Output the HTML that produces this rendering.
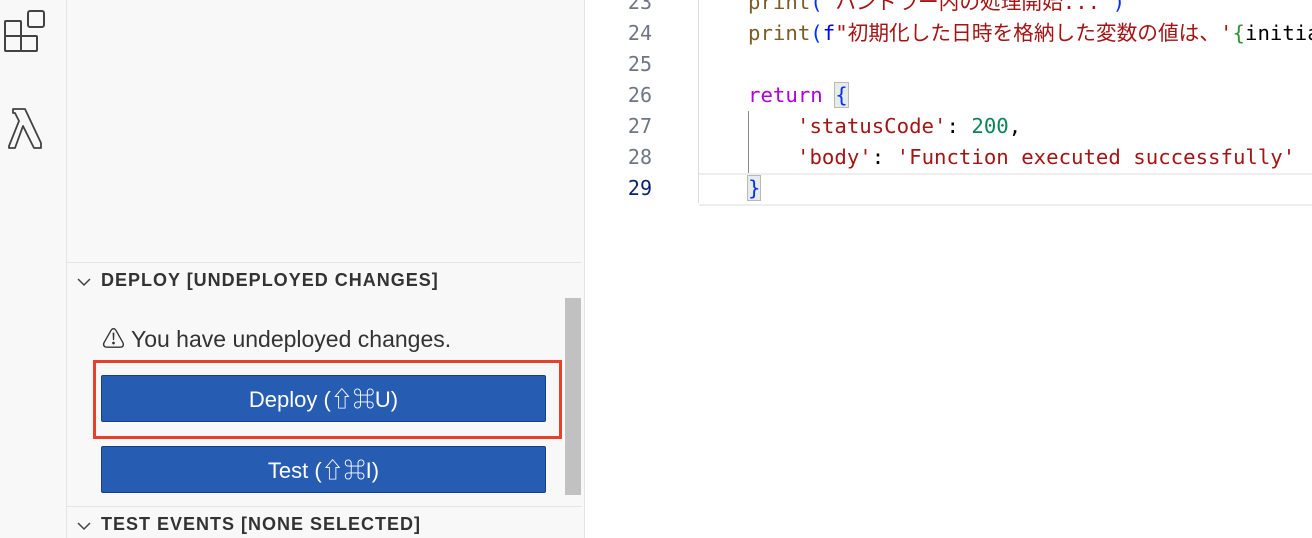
<!DOCTYPE html>
<html><head><meta charset="utf-8"><style>
body{margin:0;width:1312px;height:538px;overflow:hidden;background:#fff;position:relative;font-family:"Liberation Sans","Noto Sans CJK JP",sans-serif}
.abs{position:absolute}
.code{font-family:"DejaVu Sans Mono","Noto Sans CJK JP",monospace;font-size:20.7px;white-space:pre;line-height:31px;height:31px}
.ln{position:absolute;left:600px;width:52px;text-align:right;color:#6e7681;font-family:"DejaVu Sans Mono",monospace;font-size:20px;line-height:31px}
.btn{position:absolute;left:101px;width:445px;height:47px;background:#265db3;border:1px solid #143f8c;border-radius:2px;color:#fff;font-size:22px;text-align:center;line-height:47px;box-sizing:border-box}
.hdr{position:absolute;left:78px;font-weight:bold;font-size:18px;color:#333;letter-spacing:1px}
</style></head><body>
<div class="abs" style="left:0;top:0;width:66px;height:538px;background:#f8f8f8"></div>
<div class="abs" style="left:66px;top:0;width:517px;height:538px;background:#f8f8f8;border-left:1px solid #e4e4e4;border-right:1px solid #e4e4e4"></div>
<svg class="abs" style="left:0;top:0" width="66" height="160" fill="none" stroke="#424242" stroke-width="2" stroke-linejoin="round">
<rect x="5" y="21" width="16" height="15" rx="1"/><rect x="5" y="36" width="16" height="15" rx="1"/><rect x="21" y="36" width="16" height="15" rx="1"/><rect x="28" y="11" width="16" height="16" rx="2"/>
<path d="M13 109H25L41 143V148H34L23 126L15 148H9V146L19 121L15 113H13Z" stroke-width="1.8"/>
</svg>
<div class="abs" style="left:67px;top:262px;width:515px;height:1px;background:#e4e4e4"></div>
<svg class="abs" style="left:76px;top:276px" width="16" height="12" fill="none" stroke="#424242" stroke-width="1.5"><path d="M2 3l6 6 6-6"/></svg>
<div class="hdr" style="left:101px;top:270px">DEPLOY [UNDEPLOYED CHANGES]</div>
<div class="abs" style="left:565px;top:298px;width:16px;height:197px;background:#c1c1c1"></div>
<div class="abs" style="left:102px;top:320px;font-size:23px;color:#333">⚠ You have undeployed changes.</div>
<div class="abs" style="left:93px;top:360px;width:469px;height:79px;border:3px solid #e8402a;box-sizing:border-box"></div>
<div class="btn" style="top:375px">Deploy (⇧⌘U)</div>
<div class="btn" style="top:446px">Test (⇧⌘I)</div>
<div class="abs" style="left:67px;top:506px;width:515px;height:1px;background:#e4e4e4"></div>
<svg class="abs" style="left:76px;top:520px" width="16" height="12" fill="none" stroke="#424242" stroke-width="1.5"><path d="M2 3l6 6 6-6"/></svg>
<div class="hdr" style="left:101px;top:514px">TEST EVENTS [NONE SELECTED]</div>
<div class="abs" style="left:698px;top:0;width:1px;height:203px;background:#ddd"></div>
<div class="abs" style="left:699px;top:173px;width:613px;height:29px;border-top:2px solid #eee;border-bottom:2px solid #eee"></div>
<div class="ln" style="top:-13px">23</div>
<div class="ln" style="top:18px">24</div>
<div class="ln" style="top:49px">25</div>
<div class="ln" style="top:80px">26</div>
<div class="ln" style="top:111px">27</div>
<div class="ln" style="top:142px">28</div>
<div class="ln" style="top:173px;color:#0b216f">29</div>
<div class="abs code" style="left:748px;top:-13px"><span style="color:#795e26">print</span><span style="color:#0431fa">(</span><span style="color:#a31515">'ハンドラー内の処理開始...'</span><span style="color:#0431fa">)</span></div>
<div class="abs code" style="left:748px;top:18px"><span style="color:#795e26">print</span><span style="color:#0431fa">(</span><span style="color:#0000ff">f</span><span style="color:#a31515">"初期化した日時を格納した変数の値は、'</span><span style="color:#319331">{</span>initial</div>
<div class="abs code" style="left:748px;top:80px"><span style="color:#af00db">return</span> <span style="color:#0431fa;background:#e8ece8;outline:1px solid #b9b9b9">{</span></div>
<div class="abs" style="left:748px;top:111px;width:1px;height:62px;background:#888"></div>
<div class="abs code" style="left:797px;top:111px"><span style="color:#a31515">'statusCode'</span>: <span style="color:#098658">200</span>,</div>
<div class="abs code" style="left:797px;top:142px"><span style="color:#a31515">'body'</span>: <span style="color:#a31515">'Function executed successfully'</span></div>
<div class="abs code" style="left:748px;top:173px"><span style="color:#0431fa;background:#e8ece8;outline:1px solid #b9b9b9">}</span></div>
</body></html>
